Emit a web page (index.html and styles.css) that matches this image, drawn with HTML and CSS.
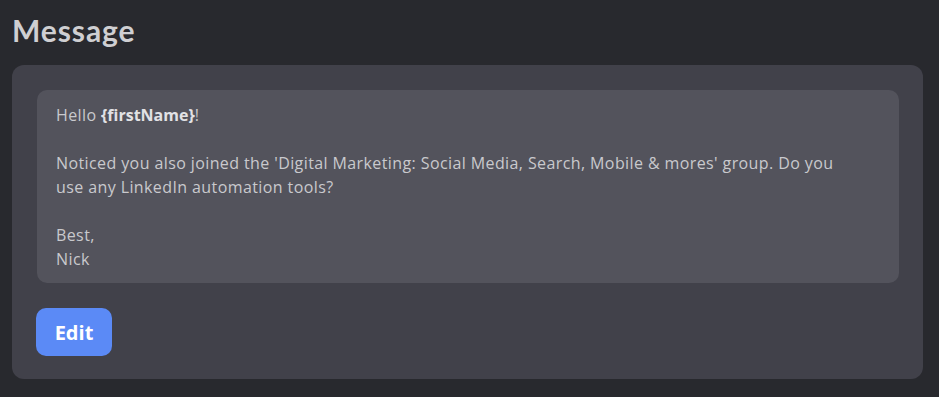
FILE: index.html
```html
<!DOCTYPE html>
<html>
<head>
<meta charset="utf-8">
<link rel="stylesheet" href="styles.css">
</head>
<body>
<main class="page">
  <h1 class="title">Message</h1>
  <section class="panel">
    <div class="message">
      <p>Hello <strong>{firstName}</strong>!</p>
      <p class="blank">&nbsp;</p>
      <p>Noticed you also joined the 'Digital Marketing: Social Media, Search, Mobile &amp; mores' group. Do you use any LinkedIn automation tools?</p>
      <p class="blank">&nbsp;</p>
      <p>Best,</p>
      <p>Nick</p>
    </div>
    <div class="actions">
      <button class="btn">Edit</button>
    </div>
  </section>
</main>
</body>
</html>
```
FILE: styles.css
```css
html, body {
  margin: 0;
  padding: 0;
  background: #28292e;
}
body {
  font-family: "Open Sans", Lato, sans-serif;
  color: #c9c9cd;
}
.page {
  padding: 10px 16px 18px 12px;
}
.title {
  margin: 0 0 15px 0;
  font-size: 30px;
  line-height: 40px;
  font-weight: 700;
  color: #cfcfd2;
  font-family: Lato, sans-serif;
  letter-spacing: 0.9px;
}
.panel {
  background: #41414a;
  border-radius: 12px;
  padding: 25px 24px 23px 24px;
}
.message {
  background: #53535c;
  border-radius: 10px;
  margin-left: 1px;
  padding: 13px 40px 12px 19px;
  font-size: 16px;
  line-height: 24px;
  letter-spacing: 0.4px;
  color: #c9c9cd;
}
.message p {
  margin: 0;
}
.message strong {
  color: #e2e2e5;
  font-weight: 700;
  letter-spacing: 0;
}
.actions {
  margin-top: 25px;
  display: flex;
}
.btn {
  width: 76px;
  height: 48px;
  border: none;
  border-radius: 10px;
  background: #5b8af6;
  color: #ffffff;
  font-family: "Open Sans", Lato, sans-serif;
  font-size: 20px;
  font-weight: 700;
  padding: 0;
  cursor: pointer;
}
```
